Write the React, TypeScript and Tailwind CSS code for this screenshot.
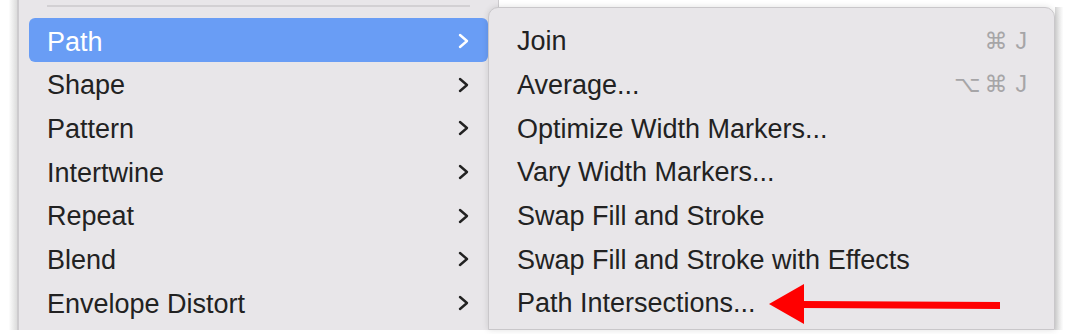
const mainItems = [
  "Path",
  "Shape",
  "Pattern",
  "Intertwine",
  "Repeat",
  "Blend",
  "Envelope Distort",
];

const subItems: { label: string; keys?: string[] }[] = [
  { label: "Join", keys: ["⌘", "J"] },
  { label: "Average...", keys: ["⌥", "⌘", "J"] },
  { label: "Optimize Width Markers..." },
  { label: "Vary Width Markers..." },
  { label: "Swap Fill and Stroke" },
  { label: "Swap Fill and Stroke with Effects" },
  { label: "Path Intersections..." },
];

function Chevron() {
  return (
    <svg width="12" height="16" viewBox="0 0 12 16" fill="none" className="mt-[2px]">
      <path
        d="M3 2 L10 8 L3 14"
        stroke="currentColor"
        strokeWidth="2.4"
        strokeLinecap="round"
        strokeLinejoin="round"
      />
    </svg>
  );
}

export default function App() {
  return (
    <div
      className="flex h-[334px] w-[1072px] overflow-hidden bg-white text-[#222]"
      style={{ fontFamily: '"Liberation Sans", Arial, "DejaVu Sans", sans-serif' }}
    >
      {/* left shadow */}
      <div className="h-[330px] w-[18px] bg-gradient-to-r from-white via-white to-[#dcdcdc]"></div>

      {/* Main menu */}
      <div className="h-[330px] w-[482px] shrink-0 border-l-2 border-r border-[#cdcbce] bg-[#e8e6e9] pt-[5px]">
        <div className="ml-[28px] mr-[28px] h-[2px] bg-[#d2d0d3]"></div>
        <div className="pt-[11px]">
          {mainItems.map((item, i) => (
            <div
              key={item}
              className={
                i === 0
                  ? "ml-[10px] mr-[10px] flex h-[44px] items-center justify-between rounded-[6px] bg-[#699df5] pl-[18px] pr-[19px] text-white"
                  : "ml-[10px] mr-[10px] flex h-[43.67px] items-center justify-between pl-[18px] pr-[19px]"
              }
            >
              <span className="pt-[4px] text-[27px] leading-none">{item}</span>
              <Chevron />
            </div>
          ))}
        </div>
      </div>

      {/* Submenu */}
      <div className="relative z-10 -ml-[11px] mt-[7px] h-[323px] w-[567px] shrink-0 rounded-t-[10px] border border-[#c9c7ca] bg-[#e8e6e9] pt-[10px] shadow-[0_0_6px_rgba(0,0,0,0.12)]">
        {subItems.map((item) => (
          <div
            key={item.label}
            className="flex h-[43.67px] items-center justify-between pl-[28px] pr-[27px]"
          >
            <span className="pt-[4px] text-[27px] leading-none">{item.label}</span>
            {item.keys && (
              <span className="flex items-center gap-[6px] pt-[3px] text-[23px] leading-none text-[#a6a5a7]">
                {item.keys.map((k, j) => (
                  <span
                    key={j}
                    className={k === "⌥" ? "-mr-[2px]" : k === "⌘" ? "mr-[2px]" : ""}
                    style={
                      k === "J"
                        ? undefined
                        : { fontFamily: '"DejaVu Sans", sans-serif' }
                    }
                  >
                    {k}
                  </span>
                ))}
              </span>
            )}
          </div>
        ))}

        {/* red annotation arrow */}
        <svg
          className="absolute left-[279px] top-[275px]"
          width="234"
          height="44"
          viewBox="0 0 234 44"
        >
          <polygon points="1,21 36,1 36,41" fill="#ff0000" />
          <polygon points="34,18 232,19 232,26 34,25" fill="#ff0000" />
        </svg>
      </div>

      {/* right shadow */}
      <div className="mt-[7px] h-[323px] w-[18px] bg-gradient-to-r from-[#d6d6d6] via-white to-white"></div>
    </div>
  );
}
